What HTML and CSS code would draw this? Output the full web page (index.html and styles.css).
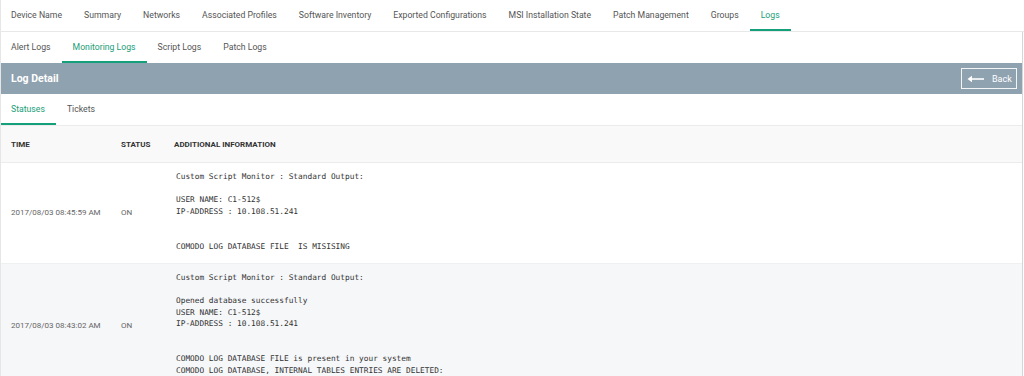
FILE: index.html
```html
<!DOCTYPE html>
<html>
<head>
<meta charset="utf-8">
<link rel="stylesheet" href="styles.css">
</head>
<body>
<div class="page">
  <nav class="tabs top">
    <span class="tab">Device Name</span>
    <span class="tab">Summary</span>
    <span class="tab">Networks</span>
    <span class="tab">Associated Profiles</span>
    <span class="tab">Software Inventory</span>
    <span class="tab">Exported Configurations</span>
    <span class="tab">MSI Installation State</span>
    <span class="tab">Patch Management</span>
    <span class="tab">Groups</span>
    <span class="tab active">Logs</span>
  </nav>
  <div class="panel">
    <nav class="tabs sub">
      <span class="tab">Alert Logs</span>
      <span class="tab active">Monitoring Logs</span>
      <span class="tab">Script Logs</span>
      <span class="tab">Patch Logs</span>
    </nav>
    <div class="bar">
      <span class="bar-title">Log Detail</span>
      <button class="back"><svg width="17" height="8" viewBox="0 0 17 8"><path d="M17 4H3" stroke="#fff" stroke-width="1.6"/><path d="M0.5 4L5 0.8V7.2Z" fill="#fff"/></svg><span>Back</span></button>
    </div>
    <nav class="tabs sub2">
      <span class="tab active">Statuses</span>
      <span class="tab">Tickets</span>
    </nav>
    <div class="table">
      <div class="thead">
        <div class="c-time">TIME</div>
        <div class="c-status">STATUS</div>
        <div class="c-info">ADDITIONAL INFORMATION</div>
      </div>
      <div class="row">
        <div class="c-time">2017/08/03 08:45:59 AM</div>
        <div class="c-status">ON</div>
        <pre class="c-info">Custom Script Monitor : Standard Output:

USER NAME: C1-512$
IP-ADDRESS : 10.108.51.241


COMODO LOG DATABASE FILE  IS MISISING</pre>
      </div>
      <div class="row alt">
        <div class="c-time">2017/08/03 08:43:02 AM</div>
        <div class="c-status">ON</div>
        <pre class="c-info">Custom Script Monitor : Standard Output:

Opened database successfully
USER NAME: C1-512$
IP-ADDRESS : 10.108.51.241


COMODO LOG DATABASE FILE is present in your system
COMODO LOG DATABASE, INTERNAL TABLES ENTRIES ARE DELETED:
</pre>
      </div>
    </div>
  </div>
</div>
</body>
</html>
```
FILE: styles.css
```css
html, body {
  margin: 0;
  padding: 0;
  background: #fff;
  overflow: hidden;
}
body {
  font-family: Roboto, "Liberation Sans", sans-serif;
  color: #555;
  width: 1024px;
  height: 376px;
}
.page {
  border-left: 1px solid #e6e6e6;
}
.tabs {
  display: flex;
  align-items: stretch;
}
.tab {
  padding: 0 11px;
  display: flex;
  align-items: center;
  font-size: 8.7px;
  color: #555;
  border-bottom: 2px solid transparent;
  box-sizing: border-box;
}
.tab.active {
  color: #1a9e78;
  border-bottom-color: #13a07a;
}
.top {
  height: 31px;
  border-bottom: 1px solid #e8e8e8;
  margin-left: -1px;
  padding-left: 1px;
}
.top .tab:first-child { padding-left: 10px; }
.panel {
  width: 1021px;
  border-right: 1px solid #d6d6d6;
}
.sub {
  height: 31px;
}
.sub .tab:first-child { padding-left: 10px; }
.bar {
  height: 31px;
  background: #8fa2b0;
  display: flex;
  align-items: center;
  justify-content: space-between;
  padding: 0 5px 0 10px;
}
.bar-title {
  color: #fff;
  font-weight: 700;
  font-size: 10.5px;
}
.back {
  width: 56px;
  height: 21px;
  border: 1px solid #f2f4f6;
  background: transparent;
  display: flex;
  align-items: center;
  padding: 0 0 0 5px;
  gap: 8px;
  color: #fff;
  font-family: Roboto, "Liberation Sans", sans-serif;
  font-size: 9px;
  box-sizing: border-box;
}
.sub2 {
  height: 31px;
  border-bottom: 1px solid #ececec;
}
.sub2 .tab:first-child { padding-left: 10px; }
.thead, .row {
  display: flex;
}
.thead {
  height: 36px;
  align-items: center;
  background: #f9f9f9;
  border-bottom: 1px solid #ececec;
  font-size: 8px;
  font-weight: 700;
  color: #333;
}
.row {
  align-items: center;
  border-bottom: 1px solid #eef0f2;
  font-size: 8px;
  color: #666;
}
.row.alt {
  background: #f6f7f9;
}
.c-time {
  width: 110px;
  padding-left: 10px;
}
.c-status {
  width: 53px;
}
.c-info {
  flex: 1;
}
pre.c-info {
  margin: 0;
  padding: 8px 0 10px 2px;
  font-family: "DejaVu Sans Mono", "Liberation Mono", monospace;
  font-size: 7.8px;
  line-height: 11.67px;
  color: #333;
}
```
